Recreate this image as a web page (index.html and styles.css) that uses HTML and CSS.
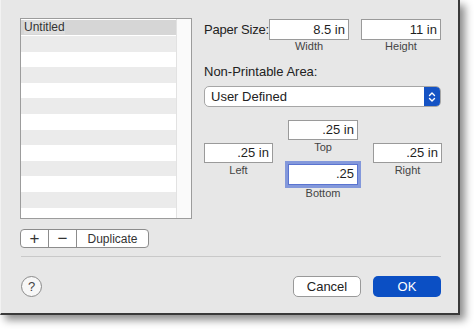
FILE: index.html
```html
<!DOCTYPE html>
<html lang="en">
<head>
    <meta charset="UTF-8">
    <meta name="viewport" content="width=device-width, initial-scale=1.0">
    <title>Custom Paper Sizes</title>
    <link rel="stylesheet" href="styles.css">
</head>
<body>
    <div class="dialog">
        <div class="main">
            <div class="left">
                <div class="list">
                    <div class="rows">
                        <div class="row selected"><span>Untitled</span></div>
                        <div class="row"></div>
                        <div class="row"></div>
                        <div class="row"></div>
                        <div class="row"></div>
                        <div class="row"></div>
                        <div class="row"></div>
                        <div class="row"></div>
                        <div class="row"></div>
                        <div class="row"></div>
                        <div class="row"></div>
                        <div class="row"></div>
                        <div class="row"></div>
                    </div>
                    <div class="scroll-track"></div>
                </div>
                <div class="segmented">
                    <div class="seg seg-icon">+</div>
                    <div class="seg seg-icon">&minus;</div>
                    <div class="seg seg-text">Duplicate</div>
                </div>
            </div>

            <div class="right">
                <div class="size-row">
                    <div class="label paper-label">Paper Size:</div>
                    <div class="field-col">
                        <div class="field wide">8.5 in</div>
                        <div class="sub">Width</div>
                    </div>
                    <div class="field-col">
                        <div class="field wide">11 in</div>
                        <div class="sub">Height</div>
                    </div>
                </div>

                <div class="label area-label">Non-Printable Area:</div>

                <div class="select">
                    <span>User Defined</span>
                    <div class="stepper">
                        <svg width="8" height="12" viewBox="0 0 8 12">
                            <path d="M1.5 4.5 L4 2 L6.5 4.5" fill="none" stroke="#fff" stroke-width="1.4" stroke-linecap="round" stroke-linejoin="round"/>
                            <path d="M1.5 7.5 L4 10 L6.5 7.5" fill="none" stroke="#fff" stroke-width="1.4" stroke-linecap="round" stroke-linejoin="round"/>
                        </svg>
                    </div>
                </div>

                <div class="margins">
                    <div class="m-col side">
                        <div class="field">.25 in</div>
                        <div class="sub">Left</div>
                    </div>
                    <div class="m-col">
                        <div class="field">.25 in</div>
                        <div class="sub">Top</div>
                        <div class="field focused">.25</div>
                        <div class="sub">Bottom</div>
                    </div>
                    <div class="m-col side">
                        <div class="field">.25 in</div>
                        <div class="sub">Right</div>
                    </div>
                </div>
            </div>
        </div>

        <div class="separator"></div>

        <div class="footer">
            <div class="help">?</div>
            <div class="actions">
                <div class="btn cancel">Cancel</div>
                <div class="btn ok">OK</div>
            </div>
        </div>
    </div>
</body>
</html>
```

FILE: styles.css
```css
* {
    margin: 0;
    padding: 0;
    box-sizing: border-box;
    font-family: 'Liberation Sans', Arial, sans-serif;
}

body {
    background-color: #fff;
    width: 474px;
    height: 329px;
    overflow: hidden;
}

.dialog {
    width: 460px;
    height: 315px;
    background-color: #e7e7e7;
    border-right: 2px solid #3a3a3a;
    border-bottom: 2px solid #3a3a3a;
    border-left: 1px solid #f2f2f2;
    box-shadow: 5px 5px 8px rgba(0, 0, 0, 0.45);
    padding: 18px 18px 0 19px;
    color: #222;
}

.main {
    display: grid;
    grid-template-columns: 172px 237px;
    column-gap: 12px;
}

/* list of paper sizes */
.list {
    height: 201px;
    border: 1px solid #9c9c9c;
    background-color: #fff;
    display: flex;
    overflow: hidden;
}

.rows {
    flex: 1;
    padding-top: 1px;
}

.row {
    height: 15.6px;
}

.row:nth-child(even) {
    background-color: #ebebeb;
}

.row.selected {
    background-color: #d6d6d6;
    height: 15px;
    margin-bottom: 1px;
    font-size: 12px;
    line-height: 15px;
    padding-left: 3px;
    color: #333;
}

.row.selected span {
    background-color: #dedede;
}

.scroll-track {
    width: 15px;
    background-color: #fafafa;
    border-left: 1px solid #e2e2e2;
}

.segmented {
    display: flex;
    width: 129px;
    height: 19px;
    margin-top: 10px;
    border: 1px solid #8c8c8c;
    border-radius: 4px;
    background-color: #fff;
    overflow: hidden;
}

.seg {
    display: flex;
    align-items: center;
    justify-content: center;
    color: #333;
}

.seg-icon {
    width: 28px;
    border-right: 1px solid #8c8c8c;
    font-size: 17px;
    line-height: 1;
}

.seg-text {
    flex: 1;
    font-size: 12px;
}

/* right side */
.right {
    font-size: 13px;
}

.label {
    color: #222;
    white-space: nowrap;
}

.size-row {
    display: flex;
    align-items: flex-start;
    margin-top: 1px;
}

.paper-label {
    width: 65px;
    flex-shrink: 0;
    line-height: 21px;
    letter-spacing: -0.2px;
}

.field-col {
    display: flex;
    flex-direction: column;
    align-items: center;
    margin-right: 12px;
}

.field-col:last-child {
    margin-right: 0;
}

.field {
    height: 21px;
    width: 100%;
    background-color: #fff;
    border: 1px solid #9a9a9a;
    text-align: right;
    padding-right: 3px;
    line-height: 19px;
    font-size: 13px;
    color: #1f1f1f;
}

.field.wide {
    width: 80px;
}

.sub {
    font-size: 11px;
    color: #444;
    line-height: 13px;
    text-align: center;
}

.area-label {
    margin-top: 11px;
    line-height: 16px;
}

.select {
    display: flex;
    align-items: center;
    justify-content: space-between;
    height: 21px;
    margin-top: 6px;
    border: 1px solid #a6a6a6;
    border-radius: 5px;
    background-color: #fff;
    padding-left: 6px;
    overflow: hidden;
}

.stepper {
    width: 16px;
    height: 100%;
    background-color: #1553c4;
    display: flex;
    align-items: center;
    justify-content: center;
}

.margins {
    display: grid;
    grid-template-columns: 69px 70px 69px;
    column-gap: 15px;
    margin-top: 13px;
}

.m-col {
    display: flex;
    flex-direction: column;
}

.m-col.side {
    padding-top: 23px;
}

.m-col .field {
    height: 20px;
    line-height: 18px;
}

.m-col .field.focused {
    height: 21px;
    margin-top: 10px;
    border-color: #5a74d0;
    box-shadow: 0 0 0 3px rgba(88, 118, 214, 0.7);
}

.m-col .sub {
    margin-top: 1px;
}

.m-col .focused + .sub {
    margin-top: 2px;
}

.separator {
    height: 1px;
    background-color: #c9c9c9;
    margin-top: 8px;
    margin-left: 1px;
    width: 420px;
}

/* footer */
.footer {
    display: flex;
    justify-content: space-between;
    align-items: center;
    width: 421px;
    margin-top: 19px;
}

.help {
    width: 21px;
    height: 21px;
    border: 1px solid #8a8a8a;
    border-radius: 50%;
    background-color: #f7f7f7;
    display: flex;
    align-items: center;
    justify-content: center;
    font-size: 13px;
    color: #444;
    margin-left: 1px;
}

.actions {
    display: flex;
    gap: 12px;
}

.btn {
    height: 21px;
    border-radius: 5px;
    display: flex;
    align-items: center;
    justify-content: center;
    font-size: 13px;
}

.cancel {
    width: 68px;
    background-color: #fff;
    border: 1px solid #999;
    color: #222;
}

.ok {
    width: 68px;
    background-color: #0b4fc4;
    color: #fff;
}
```
